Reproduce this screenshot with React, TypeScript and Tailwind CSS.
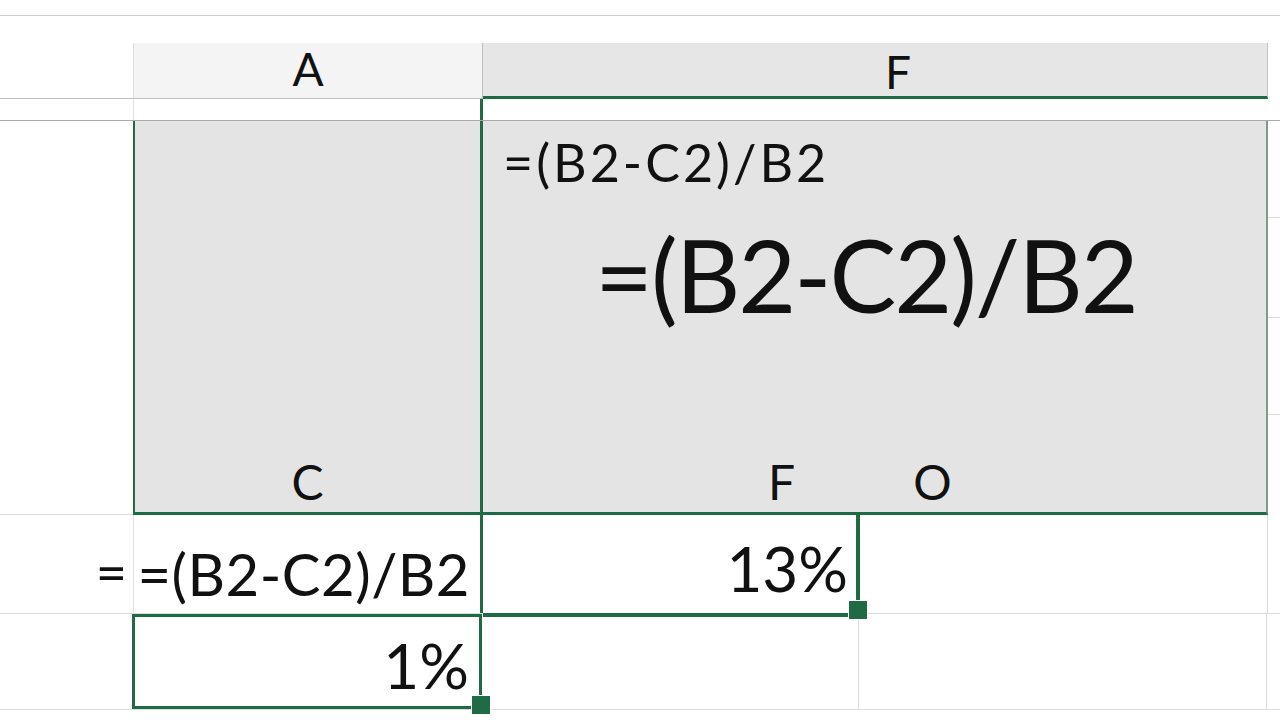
const green = "border-[#1f6b43]";

// Zoomed-in worksheet: two column headers, a merged grey preview block and two result rows
export default function App() {
  return (
    <div
      className="w-[1280px] h-[720px] overflow-hidden bg-white text-[#111] relative"
      style={{ fontFamily: "Lato, 'Open Sans', sans-serif" }}
    >
      {/* ribbon edge */}
      <div className="h-[16px] border-b border-[#cdcdcd]" />
      <div className="h-[27px]" />

      {/* column headers */}
      <div className="flex h-[56px]">
        <div className="w-[133px] border-b border-[#bdbdbd]" />
        <div className="w-[350px] bg-[#f4f4f4] border-b border-r border-[#bdbdbd] border-l border-l-[#dcdcdc] flex items-center justify-center text-[46px] leading-none pb-1">
          A
        </div>
        <div className={`w-[785px] bg-[#e6e6e6] border-b-[3px] ${green} border-r border-r-[#c4c4c4] flex items-center justify-center text-[46px] leading-none pt-1 pl-[46px]`}>
          F
        </div>
        <div className="flex-1" />
      </div>

      {/* thin row under the headers */}
      <div className="flex h-[22px] border-b border-[#a9a9a9]">
        <div className="w-[133px]" />
        <div className={`w-[350px] border-l border-l-[#e2e2e2] border-r-[3px] ${green}`} />
        <div className="w-[785px]" />
        <div className="flex-1" />
      </div>

      {/* grey preview block */}
      <div className="flex h-[394px]">
        <div className="w-[133px] border-b border-[#dedede]" />
        <div className={`w-[350px] bg-[#e4e4e4] border-l-2 border-r-[3px] border-b-[3px] ${green} flex flex-col justify-end items-center pb-[6px]`}>
          <span className="text-[48px] leading-none">C</span>
        </div>
        <div className={`w-[785px] bg-[#e4e4e4] border-b-[3px] ${green} border-r-2 border-r-[#7f9c8a] flex flex-col`}>
          <div className="pl-[20px] pt-[15px] text-[52px] leading-none tracking-[3px]">=(B2-C2)/B2</div>
          <div className="pl-[112px] pt-[36px] text-[100px] leading-none tracking-[-2px]">=(B2-C2)/B2</div>
          <div className="mt-auto flex items-end pb-[6px] text-[48px] leading-none">
            <span className="ml-[285px]">F</span>
            <span className="ml-[118px]">O</span>
          </div>
        </div>
        <div className="flex-1 flex flex-col">
          <div className="h-[97px] border-b border-[#dcdcdc]" />
          <div className="h-[100px] border-b border-[#dcdcdc]" />
          <div className="h-[97px] border-b border-[#dcdcdc]" />
        </div>
      </div>

      {/* row with the typed formula and its result */}
      <div className="flex items-start h-[99px] border-b border-[#dcdcdc]">
        <div className="w-[133px] h-full relative">
          <span className="absolute right-[6px] bottom-[14px] text-[54px] leading-none">=</span>
        </div>
        <div className={`w-[350px] h-full border-l border-l-[#e2e2e2] border-r-[3px] ${green} flex items-end justify-end pr-[10px] pb-[10px] text-[58px] leading-none tracking-[0.5px]`}>
          =(B2-C2)/B2
        </div>
        <div className={`w-[377px] h-[102px] relative z-10 border-r-[4px] border-b-[4px] ${green} flex items-end justify-end pr-[8px] pb-[14px] text-[62px] leading-none`}>
          13%
          <div className="absolute -right-[12px] -bottom-[7px] w-[20px] h-[20px] bg-[#1f6b43] border border-white" />
        </div>
        <div className="w-[408px] h-full border-r border-[#dcdcdc]" />
        <div className="flex-1" />
      </div>

      {/* selected percentage cell */}
      <div className="flex h-[96px] border-b border-[#dcdcdc]">
        <div className="w-[133px]" />
        <div className={`w-[350px] relative border-[3px] ${green} -ml-[1px] flex items-end justify-end pr-[10px] pb-[10px] text-[62px] leading-none`}>
          1%
          <div className="absolute -right-[12px] -bottom-[9px] w-[20px] h-[20px] bg-[#1f6b43] border border-white" />
        </div>
        <div className="w-[377px] border-r border-[#dcdcdc]" />
        <div className="w-[408px] border-r border-[#dcdcdc]" />
        <div className="flex-1" />
      </div>
    </div>
  );
}
